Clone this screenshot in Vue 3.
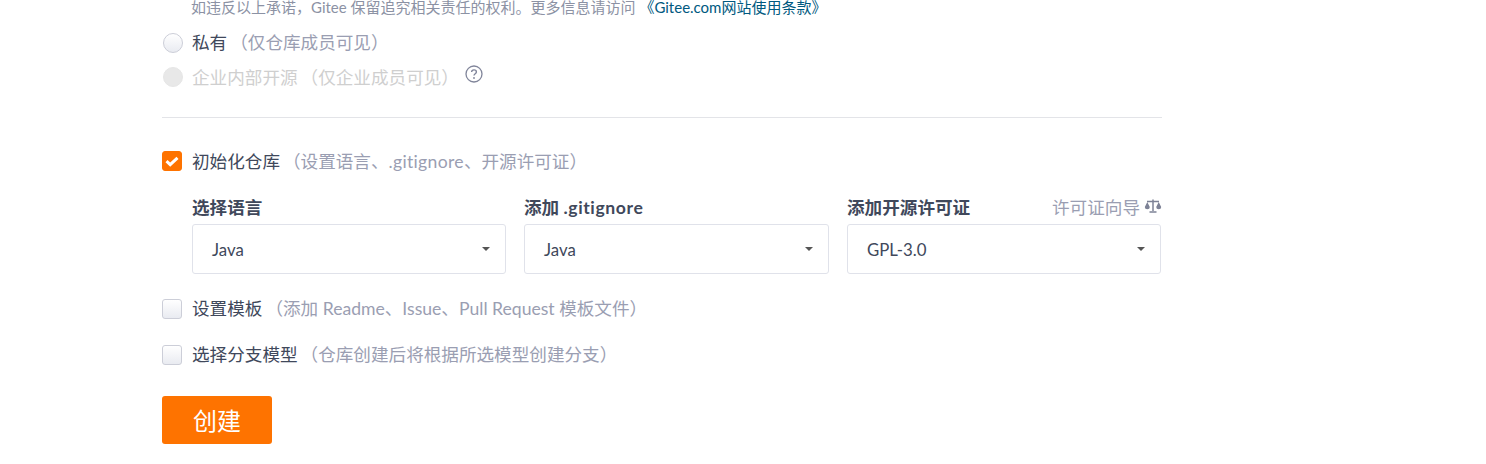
<script setup>
const selects = [
  { label: '选择语言', value: 'Java' },
  { label: '添加 ', latin: '.gitignore', value: 'Java' },
  { label: '添加开源许可证', value: 'GPL-3.0', guide: '许可证向导' }
]
</script>

<template>
  <form class="form" @submit.prevent>
    <p class="notice">
      如违反以上承诺，Gitee 保留追究相关责任的权利。更多信息请访问
      <a class="link">《Gitee.com网站使用条款》</a>
    </p>

    <div class="option radio-private">
      <span class="radio"></span>
      <span class="name">私有</span>
      <span class="hint">（仅仓库成员可见）</span>
    </div>
    <div class="option radio-enterprise disabled">
      <span class="radio"></span>
      <span class="name">企业内部开源</span>
      <span class="hint">（仅企业成员可见）</span>
      <svg class="help" viewBox="0 0 18 18" width="18" height="18">
        <circle cx="9" cy="9" r="8" fill="none" stroke="#80859a" stroke-width="1.3" />
        <path d="M6.6 7.1c0-1.4 1-2.2 2.4-2.2s2.4.8 2.4 2c0 1.8-2.4 1.8-2.4 3.6" fill="none" stroke="#80859a" stroke-width="1.4" />
        <circle cx="9" cy="13" r=".9" fill="#80859a" />
      </svg>
    </div>

    <div class="divider"></div>

    <div class="option init">
      <span class="checkbox checked">
        <svg viewBox="0 0 20 20" width="20" height="20">
          <path d="M4.5 10.2l3.7 3.4L15.5 6.8" fill="none" stroke="#fff" stroke-width="3" />
        </svg>
      </span>
      <span class="name">初始化仓库</span>
      <span class="hint">（设置语言、<span class="latin">.gitignore</span>、开源许可证）</span>
    </div>

    <div class="selects">
      <div v-for="item in selects" :key="item.label" class="field">
        <div class="field-head">
          <label class="field-label">{{ item.label }}<span v-if="item.latin" class="latin">{{ item.latin }}</span></label>
          <span v-if="item.guide" class="guide">
            {{ item.guide }}
            <svg viewBox="0 0 18 14" width="18" height="14">
              <path d="M9 0.5v11.5M5.5 13h7M3 2.5h12" fill="none" stroke="#7d8296" stroke-width="1.5" />
              <path d="M0.8 8L3.3 3l2.5 5a2.5 2.2 0 0 1-5 0zM12.2 8l2.5-5 2.5 5a2.5 2.2 0 0 1-5 0z" fill="#7d8296" />
            </svg>
          </span>
        </div>
        <div class="select">
          <span>{{ item.value }}</span>
          <i class="caret"></i>
        </div>
      </div>
    </div>

    <div class="option template">
      <span class="checkbox"></span>
      <span class="name">设置模板</span>
      <span class="hint">（添加 Readme、Issue、Pull Request 模板文件）</span>
    </div>
    <div class="option branch">
      <span class="checkbox"></span>
      <span class="name">选择分支模型</span>
      <span class="hint">（仓库创建后将根据所选模型创建分支）</span>
    </div>

    <button class="submit" type="submit">创建</button>
  </form>
</template>

<style>
body {
  background: #fff;
}
</style>

<style scoped>
.form {
  width: 1000px;
  height: 464px;
  box-sizing: border-box;
  margin-left: 162px;
  overflow: hidden;
  font-family: Lato, "Noto Sans CJK SC", sans-serif;
  color: #40485b;
}

.notice {
  margin: 0 0 0 29px;
  font-size: 15px;
  line-height: 14px;
  color: #8c92a4;
  white-space: nowrap;
}

.link {
  color: #005980;
}

.latin {
  letter-spacing: 0.6px;
}

.hint .latin {
  letter-spacing: 0.3px;
}

.option {
  display: flex;
  align-items: center;
  height: 20px;
  font-size: 17.6px;
  white-space: nowrap;
}

.radio-private {
  margin-top: 19px;
}

.radio-enterprise {
  margin-top: 14px;
}

.radio {
  width: 18px;
  height: 18px;
  margin: 0 9px 0 1px;
  border: 1px solid #ccced8;
  border-radius: 50%;
  background: linear-gradient(#fff, #e9ebf1);
  flex: none;
}

.name {
  padding-bottom: 4px;
  color: #40485b;
}

.hint {
  padding-bottom: 4px;
  margin-left: 3px;
  color: #9a9eb2;
}

.init .name,
.init .hint,
.disabled .name,
.disabled .hint {
  padding-bottom: 2px;
}

.disabled .radio {
  background: #e8e8e8;
  border-color: #e6e6e6;
}

.disabled .name,
.disabled .hint {
  color: #cfcfcf;
}

.help {
  margin: -7px 0 0 6px;
}

.divider {
  height: 1px;
  margin-top: 30px;
  background: #e3e4e8;
}

.init {
  margin-top: 33px;
}

.checkbox {
  flex: none;
  width: 18px;
  height: 18px;
  margin-right: 10px;
  border: 1px solid #ccced8;
  border-radius: 3px;
  background: linear-gradient(#fff, #e9ebf1);
  display: flex;
  align-items: center;
  justify-content: center;
}

.checkbox.checked {
  background: #fe7300;
  border-color: #fe7300;
}

.checkbox svg {
  flex: none;
}

.selects {
  display: grid;
  grid-template-columns: 314px 305px 314px;
  column-gap: 18px;
  margin: 24px 0 0 30px;
}

.field-head {
  display: flex;
  justify-content: space-between;
  align-items: center;
  height: 22px;
  margin-bottom: 7px;
}

.field-label {
  font-size: 17.6px;
  font-weight: 700;
  white-space: pre;
}

.guide {
  display: flex;
  align-items: center;
  gap: 4px;
  font-size: 17.6px;
  color: #9a9eb2;
  margin-right: -1px;
}

.select {
  display: flex;
  align-items: center;
  justify-content: space-between;
  height: 50px;
  box-sizing: border-box;
  padding: 0 15px 0 19px;
  border: 1px solid #e0e2ea;
  border-radius: 3px;
  background: #fff;
  font-size: 16.8px;
  color: #40485b;
}

.caret {
  width: 0;
  height: 0;
  border-left: 4.5px solid transparent;
  border-right: 4.5px solid transparent;
  border-top: 4.5px solid #555;
}

.template {
  margin-top: 25px;
}

.branch {
  margin-top: 26px;
}

.submit {
  display: block;
  width: 110px;
  height: 48px;
  margin-top: 31px;
  border: 0;
  border-radius: 3px;
  background: #fe7300;
  color: #fff;
  font-family: inherit;
  font-size: 24px;
  padding: 0 0 2px;
}
</style>
